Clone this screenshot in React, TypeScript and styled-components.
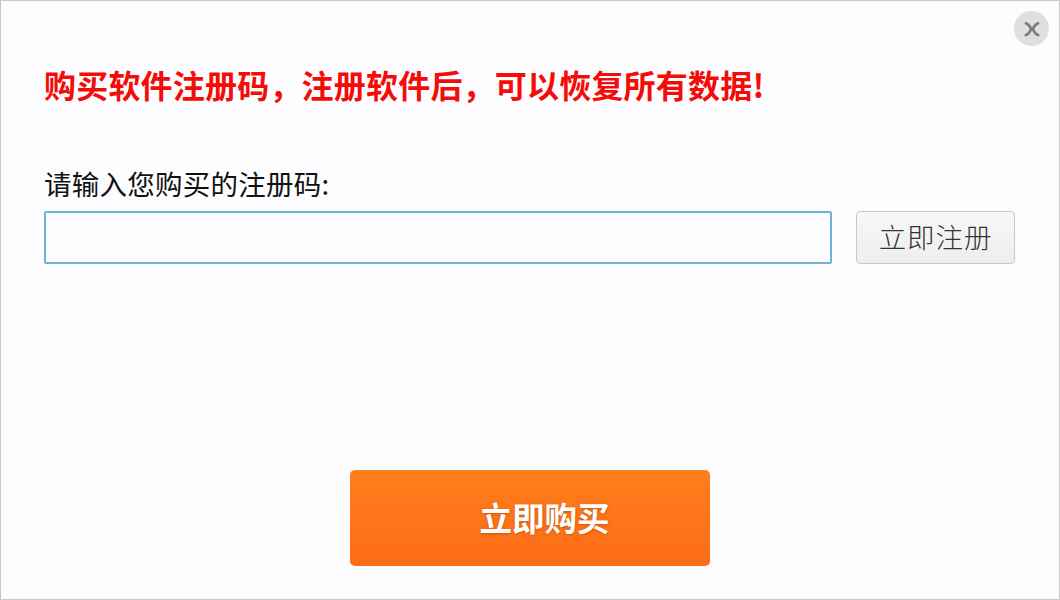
import React from "react";
import styled, { createGlobalStyle } from "styled-components";

const Global = createGlobalStyle`
  html, body { margin: 0; padding: 0; background: #fdfcfe; }
  * { box-sizing: border-box; }
`;

const Dialog = styled.div`
  position: relative;
  width: 1060px;
  height: 600px;
  border: 1px solid #c9c9c9;
  background: #fdfcfe;
  padding: 61px 44px 33px 43px;
  display: flex;
  flex-direction: column;
  font-family: "Noto Sans CJK SC", "Liberation Sans", sans-serif;
`;

const CloseButton = styled.button`
  position: absolute;
  top: 10px;
  right: 10px;
  width: 35px;
  height: 35px;
  border: 0;
  padding: 0;
  border-radius: 50%;
  background: #dfdee0;
  display: flex;
  align-items: center;
  justify-content: center;
`;

const Title = styled.h1`
  margin: 0;
  font-size: 32px;
  line-height: 44px;
  font-weight: 700;
  color: #f40c08;
  white-space: nowrap;
  letter-spacing: 0.2px;
`;

const Label = styled.label`
  margin-top: 57px;
  font-size: 27.5px;
  line-height: 40px;
  font-weight: 400;
  color: #111;
  letter-spacing: 0.25px;
`;

const Row = styled.div`
  margin-top: 8px;
  display: flex;
  align-items: stretch;
  justify-content: space-between;
`;

const CodeInput = styled.input`
  width: 788px;
  height: 53px;
  border: 2px solid #6fb3d8;
  border-radius: 2px;
  background: #fdfcfe;
  outline: none;
`;

const RegisterButton = styled.button`
  width: 159px;
  height: 53px;
  border: 1px solid #c8c8c8;
  border-radius: 4px;
  background: linear-gradient(#f8f7f8, #eeeeee);
  color: #333;
  font-family: inherit;
  font-size: 27.5px;
  font-weight: 300;
  padding: 0 0 4px;
  letter-spacing: 0.9px;
`;

const Footer = styled.div`
  margin-top: auto;
  display: flex;
  justify-content: center;
`;

const BuyButton = styled.button`
  width: 360px;
  height: 96px;
  border: 0;
  border-radius: 5px;
  background: linear-gradient(#ff7e1c, #fd6c17);
  color: #fff;
  font-family: inherit;
  font-size: 32.5px;
  font-weight: 700;
  padding: 0 0 4px 30px;
  text-shadow: 0 1px 3px rgba(170, 70, 0, 0.6);
`;

export default function App() {
  return (
    <>
      <Global />
      <Dialog>
        <CloseButton aria-label="关闭">
          <svg width="16" height="16" viewBox="0 0 17 17" fill="none">
            <path
              d="M2 2.5 C5 3.5 6.5 6 7.5 8.5 C6.5 11 5 14 2 15 M15 2.5 C12 3.5 10.5 6 9.5 8.5 C10.5 11 12 14 15 15"
              stroke="#7d7c80"
              strokeWidth="2.8"
              strokeLinecap="round"
            />
          </svg>
        </CloseButton>
        <Title>购买软件注册码，注册软件后，可以恢复所有数据!</Title>
        <Label htmlFor="code">请输入您购买的注册码:</Label>
        <Row>
          <CodeInput id="code" />
          <RegisterButton>立即注册</RegisterButton>
        </Row>
        <Footer>
          <BuyButton>立即购买</BuyButton>
        </Footer>
      </Dialog>
    </>
  );
}
